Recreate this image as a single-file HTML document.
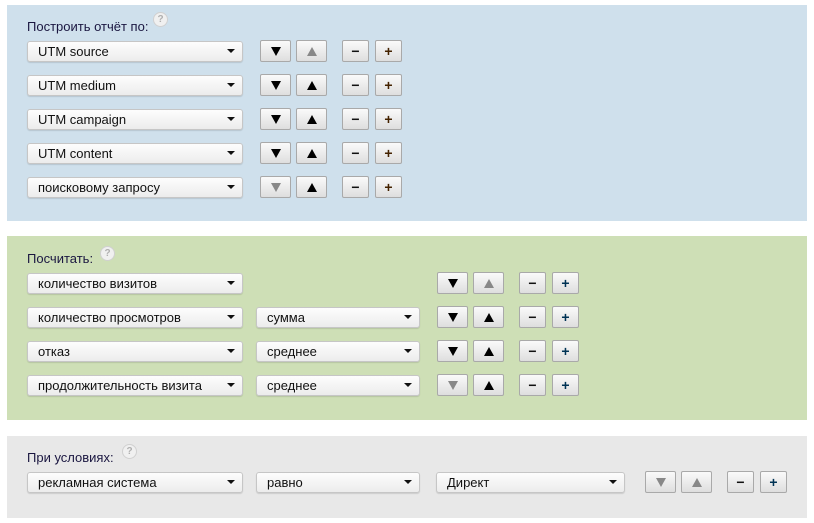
<!DOCTYPE html>
<html><head><meta charset="utf-8"><style>
*{margin:0;padding:0;box-sizing:border-box}
body{width:814px;height:523px;background:#fff;position:relative;overflow:hidden;font-family:"Liberation Sans",Arial,sans-serif;color:#1a1640}
.p{position:absolute;left:7px;width:800px}
.lbl{position:absolute;font-size:13px;color:#1a1640}
.q{position:absolute;width:15px;height:15px;border-radius:50%;border:1px solid #d0d0d0;background:#f0f0f0;color:#b0b0b0;font-size:10px;font-weight:bold;text-align:center;line-height:13px}
.s{position:absolute;height:21px;border:1px solid #c6c6c6;border-radius:3px;background:linear-gradient(#fdfdfd,#ececec);font-size:13px;line-height:19px;padding-left:10px;color:#111;box-shadow:0 1px 1px rgba(0,0,0,.12)}
.s:after{content:"";position:absolute;right:7px;top:7px;border-left:4px solid transparent;border-right:4px solid transparent;border-top:4px solid #111}
.b{position:absolute;height:22px;border:1px solid #a9a9a9;border-radius:2px;background:linear-gradient(#fafafa,#dedede);font-size:14px;font-weight:bold;text-align:center;line-height:20px;color:#111}
.b svg{position:absolute;left:50%;top:50%;margin-left:-6px;margin-top:-6px}
</style></head><body>
<div class="p" style="top:5px;height:216px;background:#cfe0ec"></div>
<div class="p" style="top:236px;height:184px;background:#cedfb6"></div>
<div class="p" style="top:436px;height:82px;background:#e8e8e8"></div>

<div class="lbl" style="left:27px;top:19px">Построить отчёт по:</div>
<div class="q" style="left:153px;top:12px">?</div>
<div class="lbl" style="left:27px;top:251px">Посчитать:</div>
<div class="q" style="left:100px;top:246px">?</div>
<div class="lbl" style="left:27px;top:450px">При условиях:</div>
<div class="q" style="left:122px;top:444px">?</div>

<div class="s" style="left:27px;top:41px;width:216px">UTM source</div>
<div class="s" style="left:27px;top:75px;width:216px">UTM medium</div>
<div class="s" style="left:27px;top:109px;width:216px">UTM campaign</div>
<div class="s" style="left:27px;top:143px;width:216px">UTM content</div>
<div class="s" style="left:27px;top:177px;width:216px">поисковому запросу</div>

<div class="b" style="left:260px;top:40px;width:31px"><svg width="12" height="12"><path d="M1 2H11L6 11Z" fill="#000"/></svg></div>
<div class="b" style="left:296px;top:40px;width:31px"><svg width="12" height="12"><path d="M1 11H11L6 2Z" fill="#888"/></svg></div>
<div class="b" style="left:342px;top:40px;width:27px">−</div>
<div class="b" style="left:375px;top:40px;width:27px;color:#420">+</div>

<div class="b" style="left:260px;top:74px;width:31px"><svg width="12" height="12"><path d="M1 2H11L6 11Z" fill="#000"/></svg></div>
<div class="b" style="left:296px;top:74px;width:31px"><svg width="12" height="12"><path d="M1 11H11L6 2Z" fill="#000"/></svg></div>
<div class="b" style="left:342px;top:74px;width:27px">−</div>
<div class="b" style="left:375px;top:74px;width:27px;color:#420">+</div>

<div class="b" style="left:260px;top:108px;width:31px"><svg width="12" height="12"><path d="M1 2H11L6 11Z" fill="#000"/></svg></div>
<div class="b" style="left:296px;top:108px;width:31px"><svg width="12" height="12"><path d="M1 11H11L6 2Z" fill="#000"/></svg></div>
<div class="b" style="left:342px;top:108px;width:27px">−</div>
<div class="b" style="left:375px;top:108px;width:27px;color:#420">+</div>

<div class="b" style="left:260px;top:142px;width:31px"><svg width="12" height="12"><path d="M1 2H11L6 11Z" fill="#000"/></svg></div>
<div class="b" style="left:296px;top:142px;width:31px"><svg width="12" height="12"><path d="M1 11H11L6 2Z" fill="#000"/></svg></div>
<div class="b" style="left:342px;top:142px;width:27px">−</div>
<div class="b" style="left:375px;top:142px;width:27px;color:#420">+</div>

<div class="b" style="left:260px;top:176px;width:31px"><svg width="12" height="12"><path d="M1 2H11L6 11Z" fill="#888"/></svg></div>
<div class="b" style="left:296px;top:176px;width:31px"><svg width="12" height="12"><path d="M1 11H11L6 2Z" fill="#000"/></svg></div>
<div class="b" style="left:342px;top:176px;width:27px">−</div>
<div class="b" style="left:375px;top:176px;width:27px;color:#420">+</div>

<div class="s" style="left:27px;top:273px;width:216px">количество визитов</div>
<div class="s" style="left:27px;top:307px;width:216px">количество просмотров</div>
<div class="s" style="left:256px;top:307px;width:164px">сумма</div>
<div class="s" style="left:27px;top:341px;width:216px">отказ</div>
<div class="s" style="left:256px;top:341px;width:164px">среднее</div>
<div class="s" style="left:27px;top:375px;width:216px">продолжительность визита</div>
<div class="s" style="left:256px;top:375px;width:164px">среднее</div>

<div class="b" style="left:437px;top:272px;width:31px"><svg width="12" height="12"><path d="M1 2H11L6 11Z" fill="#000"/></svg></div>
<div class="b" style="left:473px;top:272px;width:31px"><svg width="12" height="12"><path d="M1 11H11L6 2Z" fill="#888"/></svg></div>
<div class="b" style="left:519px;top:272px;width:27px">−</div>
<div class="b" style="left:552px;top:272px;width:27px;color:#035">+</div>

<div class="b" style="left:437px;top:306px;width:31px"><svg width="12" height="12"><path d="M1 2H11L6 11Z" fill="#000"/></svg></div>
<div class="b" style="left:473px;top:306px;width:31px"><svg width="12" height="12"><path d="M1 11H11L6 2Z" fill="#000"/></svg></div>
<div class="b" style="left:519px;top:306px;width:27px">−</div>
<div class="b" style="left:552px;top:306px;width:27px;color:#035">+</div>

<div class="b" style="left:437px;top:340px;width:31px"><svg width="12" height="12"><path d="M1 2H11L6 11Z" fill="#000"/></svg></div>
<div class="b" style="left:473px;top:340px;width:31px"><svg width="12" height="12"><path d="M1 11H11L6 2Z" fill="#000"/></svg></div>
<div class="b" style="left:519px;top:340px;width:27px">−</div>
<div class="b" style="left:552px;top:340px;width:27px;color:#035">+</div>

<div class="b" style="left:437px;top:374px;width:31px"><svg width="12" height="12"><path d="M1 2H11L6 11Z" fill="#888"/></svg></div>
<div class="b" style="left:473px;top:374px;width:31px"><svg width="12" height="12"><path d="M1 11H11L6 2Z" fill="#000"/></svg></div>
<div class="b" style="left:519px;top:374px;width:27px">−</div>
<div class="b" style="left:552px;top:374px;width:27px;color:#035">+</div>

<div class="s" style="left:27px;top:472px;width:216px">рекламная система</div>
<div class="s" style="left:256px;top:472px;width:164px">равно</div>
<div class="s" style="left:436px;top:472px;width:189px">Директ</div>

<div class="b" style="left:645px;top:471px;width:31px"><svg width="12" height="12"><path d="M1 2H11L6 11Z" fill="#888"/></svg></div>
<div class="b" style="left:681px;top:471px;width:31px"><svg width="12" height="12"><path d="M1 11H11L6 2Z" fill="#888"/></svg></div>
<div class="b" style="left:727px;top:471px;width:27px">−</div>
<div class="b" style="left:760px;top:471px;width:27px;color:#035">+</div>
</body></html>
